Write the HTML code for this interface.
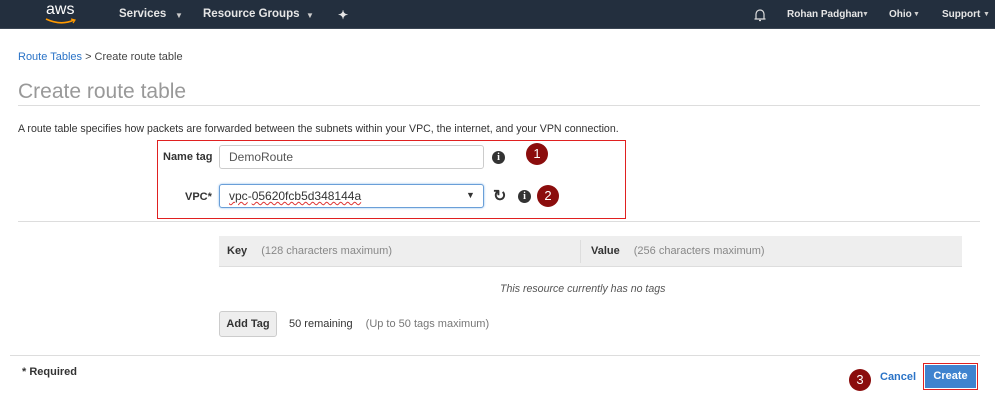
<!DOCTYPE html>
<html><head><style>
*{margin:0;padding:0;box-sizing:border-box}
body{width:995px;height:420px;background:#fff;font-family:"Liberation Sans",Arial,sans-serif;position:relative;overflow:hidden;color:#333}
.a{position:absolute}
.nav{left:0;top:0;width:995px;height:29px;background:#232f3e;border-bottom:1px solid #3a4553}
.nt{color:#e6e6e6;font-size:12px;font-weight:bold;top:8px}
.ar{color:#ccc;font-size:8px;top:11px}
.circ{border-radius:50%;background:#8b0d0d;color:#fff;font-size:13px;text-align:center;width:22px;height:22px;line-height:22px}
.inp{border:1px solid #ccc;border-radius:3px;height:24px;background:#fff;font-size:12px;padding-left:9px;line-height:22px}
.info{width:13px;height:13px;border-radius:50%;background:#333;color:#fff;font-size:10px;font-weight:bold;text-align:center;line-height:13px;font-family:"Liberation Serif",serif}
</style></head><body>
<div class="a nav"></div>
<div class="a" style="left:46px;top:1px;color:#fff;font-size:16px;">aws</div>
<svg class="a" style="left:44px;top:17px" width="34" height="8"><path d="M2 2 Q17 9 30 3" stroke="#f90" stroke-width="1.6" fill="none"/><path d="M27 2 L31 3 L29 6" stroke="#f90" stroke-width="1.2" fill="none"/></svg>
<div class="a nt" style="left:119px;font-size:11.5px">Services</div><div class="a ar" style="left:175px">▼</div>
<div class="a nt" style="left:203px;font-size:11.5px">Resource Groups</div><div class="a ar" style="left:306px">▼</div>
<div class="a nt" style="left:338px">✦</div>
<svg class="a" style="left:753px;top:8px" width="14" height="14"><path d="M3 11 V6 a4 4 0 0 1 8 0 V11 M1.5 11 H12.5 M6 12.5 h2" stroke="#ddd" stroke-width="1.2" fill="none"/></svg>
<div class="a nt" style="left:787px;font-size:10px;top:9px">Rohan Padghan</div><div class="a ar" style="left:862px;font-size:7px">▼</div>
<div class="a nt" style="left:889px;font-size:10px;top:9px">Ohio</div><div class="a ar" style="left:913px;font-size:7px">▼</div>
<div class="a nt" style="left:942px;font-size:10px;top:9px">Support</div><div class="a ar" style="left:983px;font-size:7px">▼</div>

<div class="a" style="left:18px;top:51px;font-size:11px;color:#444"><span style="color:#2a73c7">Route Tables</span> &gt; Create route table</div>
<div class="a" style="left:18px;top:80px;font-size:21px;color:#999">Create route table</div>
<div class="a" style="left:18px;top:105px;width:962px;height:1px;background:#ddd"></div>
<div class="a" style="left:18px;top:123px;font-size:10.6px;color:#333">A route table specifies how packets are forwarded between the subnets within your VPC, the internet, and your VPN connection.</div>

<div class="a" style="left:157px;top:140px;width:469px;height:79px;border:1px solid #e02020"></div>
<div class="a" style="left:163px;top:151px;font-size:11px;font-weight:bold">Name tag</div>
<div class="a inp" style="left:219px;top:145px;width:265px;color:#555">DemoRoute</div>
<div class="a info" style="left:492px;top:151px">i</div>
<div class="a circ" style="left:526px;top:143px">1</div>
<div class="a" style="left:185px;top:191px;font-size:11px;font-weight:bold">VPC*</div>
<div class="a inp" style="left:219px;top:184px;width:265px;border-color:#6a9fd8;box-shadow:0 0 2px #8bb8e8;color:#333"><span style="text-decoration:underline wavy #d33;text-decoration-thickness:1px">vpc</span>-<span style="text-decoration:underline wavy #d33;text-decoration-thickness:1px">05620fcb5d348144a</span></div>
<div class="a" style="left:466px;top:190px;font-size:9px;color:#333">▼</div>
<div class="a" style="left:493px;top:186px;font-size:16px;font-weight:bold;color:#333">↻</div>
<div class="a info" style="left:518px;top:190px">i</div>
<div class="a circ" style="left:537px;top:185px">2</div>
<div class="a" style="left:18px;top:221px;width:962px;height:1px;background:#ddd"></div>

<div class="a" style="left:219px;top:236px;width:743px;height:31px;background:#eee;border-bottom:1px solid #ddd"></div>
<div class="a" style="left:580px;top:240px;width:1px;height:23px;background:#ddd"></div>
<div class="a" style="left:227px;top:245px;font-size:11px"><b>Key</b><span style="color:#888;margin-left:14px">(128 characters maximum)</span></div>
<div class="a" style="left:591px;top:245px;font-size:11px"><b>Value</b><span style="color:#888;margin-left:14px">(256 characters maximum)</span></div>
<div class="a" style="left:500px;top:283px;font-size:10.6px;font-style:italic;color:#555">This resource currently has no tags</div>
<div class="a" style="left:219px;top:311px;width:58px;height:26px;background:#eee;border:1px solid #ccc;border-radius:3px;font-size:11px;font-weight:bold;text-align:center;line-height:24px">Add Tag</div>
<div class="a" style="left:289px;top:318px;font-size:11px">50 remaining <span style="color:#777;margin-left:10px">(Up to 50 tags maximum)</span></div>
<div class="a" style="left:10px;top:355px;width:970px;height:1px;background:#ddd"></div>
<div class="a" style="left:22px;top:366px;font-size:11px;font-weight:bold">* Required</div>
<div class="a circ" style="left:849px;top:369px">3</div>
<div class="a" style="left:880px;top:371px;font-size:11px;font-weight:bold;color:#2a73c7">Cancel</div>
<div class="a" style="left:923px;top:363px;width:55px;height:27px;border:1px solid #e02020;padding:1px"><div style="background:#3f83cf;height:100%;color:#fff;font-size:11px;font-weight:bold;text-align:center;line-height:23px">Create</div></div>
</body></html>
